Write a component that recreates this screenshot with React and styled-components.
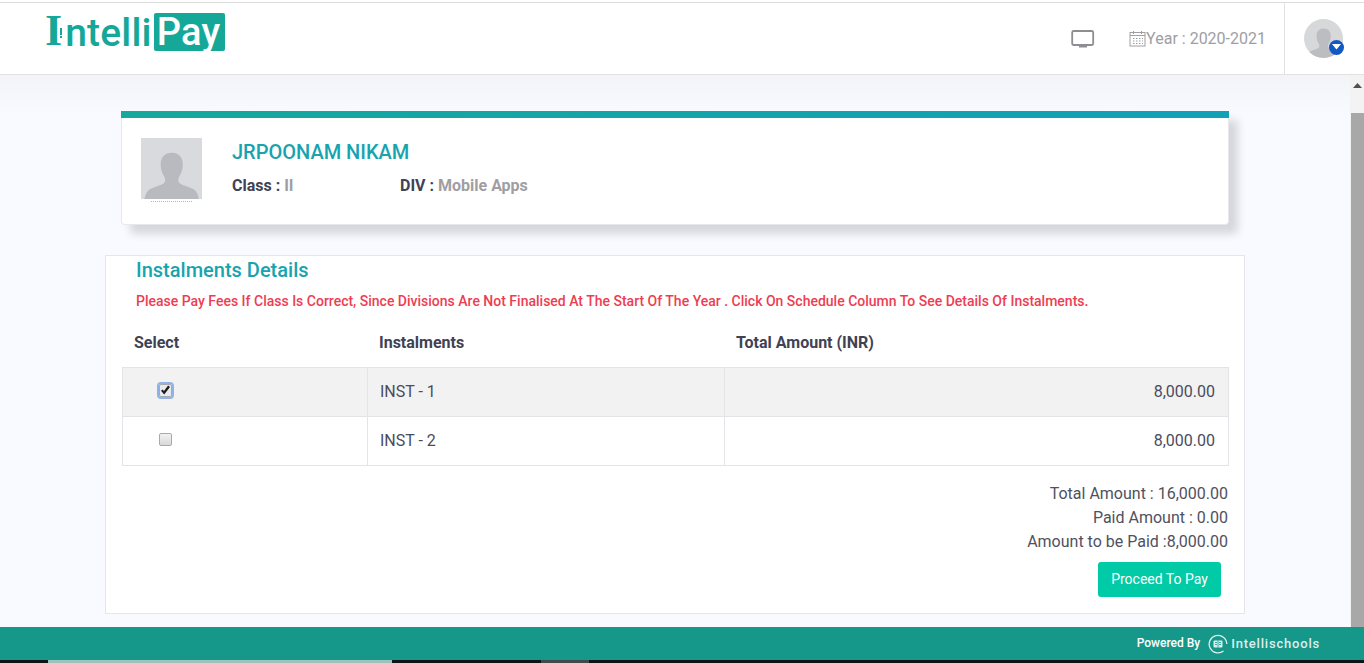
import React from 'react';
import styled, { createGlobalStyle } from 'styled-components';

const Global = createGlobalStyle`
  html, body { margin: 0; padding: 0; height: 663px; overflow: hidden; background: #f8faff; }
  * { box-sizing: border-box; }
  body { font-family: Roboto, "Liberation Sans", sans-serif; color: #3f4254; }
`;

const checkSvg = encodeURIComponent('<svg xmlns="http://www.w3.org/2000/svg" width="13" height="13" viewBox="0 0 13 13"><path d="M2 6.800l3.200 3.600 5.800-7.500-1.900-1.300-4.100 5.500-1.500-1.700z" fill="#1c1c1c"/></svg>');

const Page = styled.div`
  width: 1364px; height: 663px; display: flex; flex-direction: column; overflow: hidden;
`;
const TopEdge = styled.div`
  height: 3px; background: #fff; border-bottom: 1px solid #dcdcdc; flex: none;
`;
const Header = styled.header`
  height: 72px; flex: none; background: #fff; border-bottom: 1px solid #e2e2e2;
  display: flex; align-items: stretch; padding-left: 44px;
`;
const Logo = styled.div`
  display: flex; align-items: flex-start; padding-top: 10px; height: 100%;
`;
const LogoI = styled.span`
  position: relative; font-family: "Liberation Serif", serif; font-weight: 700; font-size: 44px; line-height: 40px;
  color: #15a898; margin: -2px 3px 0 1px; display: block;
  &::after {
    content: ''; position: absolute; left: 15px; top: 17px; width: 2px; height: 10px;
    background: linear-gradient(#15a898 0 68%, transparent 68% 80%, #15a898 80%);
  }
`;
const LogoWord = styled.span`
  font-weight: 500; font-size: 39px; line-height: 40px; letter-spacing: 0.2px; color: #15a898;
`;
const LogoPay = styled.span`
  background: #15a898; color: #fff; font-weight: 500; font-size: 38px; line-height: 39px;
  height: 38px; width: 71px; border-radius: 2px; padding-left: 3px; margin-left: 2px; letter-spacing: 0.3px;
`;
const HeaderRight = styled.div`
  margin-left: auto; display: flex; align-items: center; color: #a09ea3;
`;
const MonitorWrap = styled.div`
  display: flex; margin-right: 34px; margin-top: 1px;
`;
const YearWrap = styled.div`
  display: flex; align-items: center; margin-right: 18px; font-size: 16px; margin-top: -1px;
`;
const AvatarCell = styled.div`
  width: 80px; height: 100%; border-left: 1px solid #e2e2e2; display: flex; align-items: center; padding-left: 19px;
`;
const AvatarBox = styled.div`
  width: 39px; height: 39px; border-radius: 50%; background: #d7d8da; overflow: hidden;
`;
const AvatarOuter = styled.div`
  position: relative; width: 40px; height: 40px;
`;
const Caret = styled.div`
  position: absolute; right: 0; bottom: 4px; width: 15px; height: 15px; border-radius: 50%;
  background: #1259c3; display: flex; align-items: center; justify-content: center;
`;
const Middle = styled.div`
  flex: 1; display: flex; min-height: 0;
`;
const Main = styled.main`
  flex: 1; background: linear-gradient(#f3f4f8 0, #f8faff 42px);
  padding: 36px 105px 0; display: flex; flex-direction: column; align-items: center;
`;
const ScrollTrack = styled.div`
  width: 14px; flex: none; background: #f3f3f3; display: flex; flex-direction: column; align-items: center;
`;
const ScrollArrow = styled.div`
  height: 38px; width: 100%; display: flex; justify-content: center; padding-top: 8px; padding-left: 1px;
`;
const ScrollThumb = styled.div`
  flex: 1; width: 13px; margin-left: 1px; background: #a8a8a8;
`;
const ProfileCard = styled.section`
  width: 1108px; height: 114px; flex: none; background: #fff; border-radius: 0 0 4px 4px;
  border: 1px solid #e6e8ec; border-top: 0; box-shadow: 9px 9px 9px rgba(0,0,0,.14);
  position: relative; display: flex; padding: 27px 0 0 19px;
`;
const CardBar = styled.div`
  position: absolute; top: 0; left: -1px; right: -1px; height: 7px;
  background: linear-gradient(90deg, #15a89b, #12a0b8);
`;
const Photo = styled.div`
  width: 61px; height: 67px; flex: none; display: flex; flex-direction: column;
`;
const PhotoImg = styled.div`
  width: 61px; height: 62px; background: #d8dadd; overflow: hidden; display: flex;
`;
const PhotoCaption = styled.div`
  height: 4px; width: 41px; margin: 2px auto 0; border-top: 1px dotted #b5b5b5;
`;
const ProfileInfo = styled.div`
  margin-left: 30px; padding-top: 2px;
`;
const Name = styled.h2`
  margin: 0; font-size: 20px; line-height: 24px; font-weight: 500; color: #17a4ae;
`;
const Meta = styled.div`
  display: flex; margin-top: 12px; font-size: 16px; line-height: 20px; font-weight: 700;
`;
const MetaItem = styled.div`
  width: ${p => p.$w}px; color: #3f4254;
  span { color: #a09ea3; }
`;
const Panel = styled.section`
  width: 1140px; height: 359px; flex: none; margin-top: 30px; background: #fff; border: 1px solid #e4e6ea;
  padding: 0 15px 0 16px; display: flex; flex-direction: column; align-items: stretch;
`;
const PanelTitle = styled.h3`
  margin: 1px 0 0 14px; font-size: 20px; line-height: 26px; font-weight: 500; color: #17a4ae;
`;
const Warning = styled.p`
  margin: 8px 0 0 14px; font-size: 14px; line-height: 20px; font-weight: 500; color: #ee3d52; white-space: nowrap;
`;
const Table = styled.div`
  margin-top: 14px; display: grid; grid-template-columns: 245px 357px 505px;
`;
const Th = styled.div`
  height: 42px; font-size: 16px; font-weight: 700; line-height: 24px; padding: 6px 0 0 ${p => p.$pl}px; color: #3f4254;
`;
const Td = styled.div`
  height: ${p => p.$first ? 50 : 49}px; border-bottom: 1px solid #e2e4e8; border-left: 1px solid #e2e4e8;
  border-top: ${p => p.$first ? '1px solid #e2e4e8' : '0'};
  border-right: ${p => p.$last ? '1px solid #e2e4e8' : '0'};
  background: ${p => p.$odd ? '#f2f2f2' : '#fff'};
  display: flex; align-items: center; font-size: 16px;
  justify-content: ${p => p.$right ? 'flex-end' : 'flex-start'};
  padding: 0 13px 2px 12px;
  color: #4a4c5c;
`;
const Check = styled.input`
  appearance: none; margin: 0 0 1px 24px; width: 13px; height: 13px; border-radius: 2px;
  border: 1px solid #a9a9a9; background: linear-gradient(#f2f2f2, #d8d8d8);
  &:checked {
    background: url("data:image/svg+xml,${checkSvg}") center/13px 13px no-repeat, #e8eaf0;
    outline: 2px solid #8fb2e8; outline-offset: 0;
  }
`;
const Totals = styled.div`
  margin-top: 16px; padding-right: 1px; text-align: right; font-size: 16px; line-height: 24px; color: #4f5160;
`;
const PayRow = styled.div`
  display: flex; justify-content: flex-end; margin-top: 8px; padding-right: 8px;
`;
const PayButton = styled.button`
  width: 123px; height: 35px; border: 0; border-radius: 3px; background: #00cba6; color: #fff; padding-bottom: 3px;
  font-family: Roboto, sans-serif; font-size: 14px;
`;
const Footer = styled.footer`
  height: 33px; flex: none; background: #15978a; display: flex; align-items: center; justify-content: flex-end;
  padding-right: 44px; color: #fff;
`;
const Powered = styled.span`
  font-size: 12px; font-weight: 500; margin-right: 8px; margin-top: -1px;
`;
const BrandIcon = styled.span`
  display: flex; margin-right: 3px;
`;
const Brand = styled.span`
  font-size: 13px; font-weight: 500; letter-spacing: 0.8px; color: #dcefeb;
`;
const BottomStrip = styled.div`
  height: 3px; flex: none; background: #0d1413; padding-left: 48px; display: flex;
`;
const StripSeg = styled.div`
  width: ${p => p.$w}px; height: 3px; margin-left: ${p => p.$gap}px; background: ${p => p.$color};
`;

const Person = ({ fill }) => (
  <svg width="100%" height="100%" viewBox="0 0 61 62">
    <path fill={fill} d="M30.500 15c-7 0-11 5-11 11.500 0 4.500 1 8.500 3 11.500 1 1.500 1.500 3 1.500 5 0 3-2.500 4.200-8 6-6 2-10 3-12 9.500L3 62h55l-.5-3.500c-2-6.500-6-7.500-12-9.500-5.500-1.800-8-3-8-6 0-2 .5-3.500 1.500-5 2-3 3-7 3-11.500 0-6.500-4-11.500-11-11.500z" />
  </svg>
);

export default function App() {
  return (
    <Page>
      <Global />
      <TopEdge />
      <Header>
        <Logo>
          <LogoI>I</LogoI>
          <LogoWord>ntelli</LogoWord>
          <LogoPay>Pay</LogoPay>
        </Logo>
        <HeaderRight>
          <MonitorWrap>
            <svg width="24" height="20" viewBox="0 0 24 20" fill="none">
              <rect x="1.200" y="2" width="21" height="14" rx="1.500" stroke="#8f8d92" strokeWidth="1.800" />
              <rect x="8" y="16.500" width="8" height="2" fill="#8f8d92" />
            </svg>
          </MonitorWrap>
          <YearWrap>
            <svg width="17" height="17" viewBox="0 0 17 17" fill="none" stroke="#a09ea3">
              <rect x="1" y="2.500" width="15" height="13.500" />
              <path d="M1 5.500h15M4.500 1v3M12.500 1v3" />
              <path strokeDasharray="1.500 1.500" d="M4 8.500h10M4 11h10M4 13.500h10" />
            </svg>
            Year : 2020-2021
          </YearWrap>
          <AvatarCell>
            <AvatarOuter>
              <AvatarBox><Person fill="#bcbdc1" /></AvatarBox>
              <Caret>
                <svg width="9" height="6" viewBox="0 0 9 6"><path d="M0 0h9L4.500 5.500z" fill="#fff" /></svg>
              </Caret>
            </AvatarOuter>
          </AvatarCell>
        </HeaderRight>
      </Header>
      <Middle>
        <Main>
          <ProfileCard>
            <CardBar />
            <Photo>
              <PhotoImg><Person fill="#b9babf" /></PhotoImg>
              <PhotoCaption />
            </Photo>
            <ProfileInfo>
              <Name>JRPOONAM NIKAM</Name>
              <Meta>
                <MetaItem $w={168}>Class : <span>II</span></MetaItem>
                <MetaItem $w={200}>DIV : <span>Mobile Apps</span></MetaItem>
              </Meta>
            </ProfileInfo>
          </ProfileCard>
          <Panel>
            <PanelTitle>Instalments Details</PanelTitle>
            <Warning>Please Pay Fees If Class Is Correct, Since Divisions Are Not Finalised At The Start Of The Year . Click On Schedule Column To See Details Of Instalments.</Warning>
            <Table>
              <Th $pl={12}>Select</Th>
              <Th $pl={12}>Instalments</Th>
              <Th $pl={12}>Total Amount (INR)</Th>
              <Td $odd $first><Check type="checkbox" defaultChecked /></Td>
              <Td $odd $first>INST - 1</Td>
              <Td $odd $first $last $right>8,000.00</Td>
              <Td><Check type="checkbox" /></Td>
              <Td>INST - 2</Td>
              <Td $last $right>8,000.00</Td>
            </Table>
            <Totals>
              <div>Total Amount : 16,000.00</div>
              <div>Paid Amount : 0.00</div>
              <div>Amount to be Paid :8,000.00</div>
            </Totals>
            <PayRow><PayButton>Proceed To Pay</PayButton></PayRow>
          </Panel>
        </Main>
        <ScrollTrack>
          <ScrollArrow>
            <svg width="9" height="5" viewBox="0 0 9 5"><path d="M4.500 0L9 5H0z" fill="#505050" /></svg>
          </ScrollArrow>
          <ScrollThumb />
        </ScrollTrack>
      </Middle>
      <Footer>
        <Powered>Powered By</Powered>
        <BrandIcon>
          <svg width="20" height="20" viewBox="0 0 20 20" fill="none">
            <path d="M15.500 17A8.800 8.800 0 1 1 18.800 10" stroke="#dcefeb" strokeWidth="1.300" />
            <rect x="5.500" y="6.500" width="9" height="7" rx="1" fill="#dcefeb" />
            <path d="M10 6.500v7M7 8.500h2M7 10.500h2M11 8.500h2M11 10.500h2" stroke="#15978a" strokeWidth=".8" />
          </svg>
        </BrandIcon>
        <Brand>Intellischools</Brand>
      </Footer>
      <BottomStrip>
        <StripSeg $w={344} $gap={0} $color="#9cc4bd" />
        <StripSeg $w={48} $gap={149} $color="#444a49" />
      </BottomStrip>
    </Page>
  );
}
